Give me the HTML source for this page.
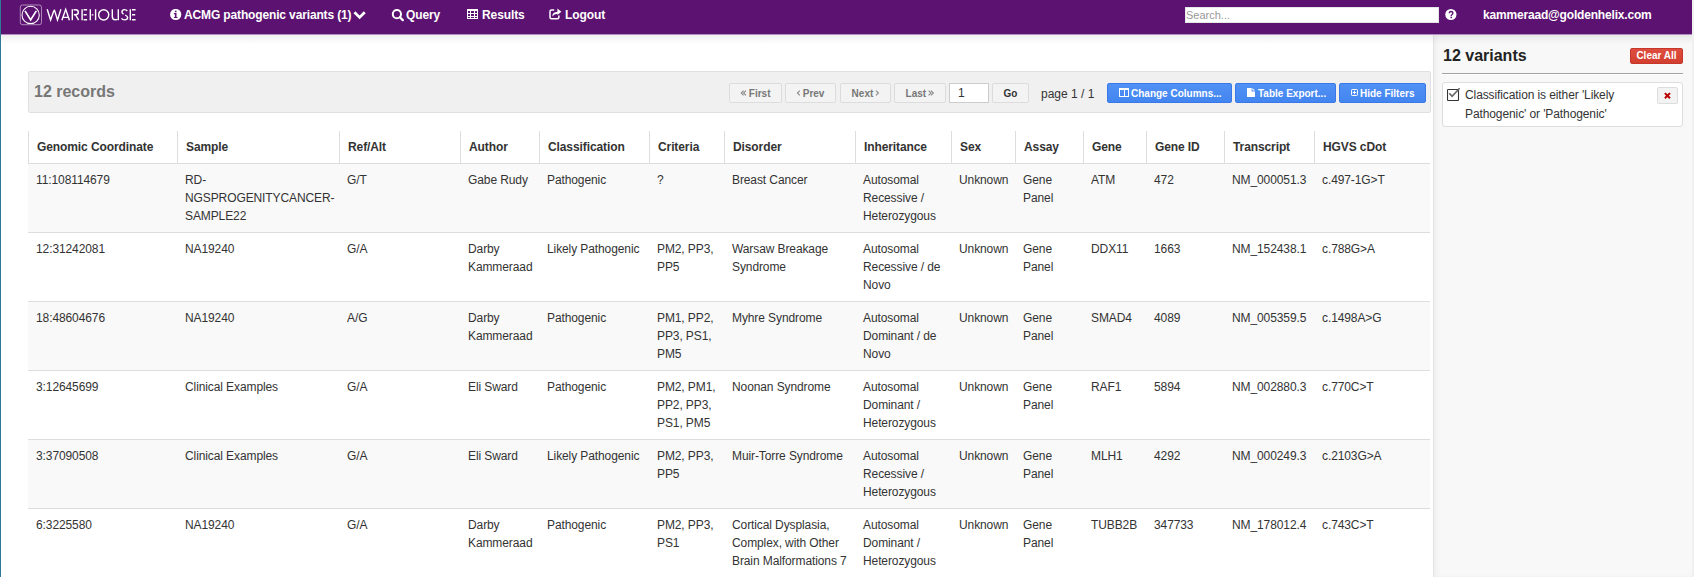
<!DOCTYPE html>
<html><head><meta charset="utf-8">
<style>
*{box-sizing:border-box;}
html,body{margin:0;padding:0;}
body{width:1694px;height:577px;overflow:hidden;position:relative;background:#fff;font-family:"Liberation Sans",sans-serif;color:#333;font-size:12px;}
.abs{position:absolute;white-space:nowrap;}
#lstrip{position:absolute;left:0;top:0;width:1px;height:577px;background:#2e7b97;z-index:5;}
#rstrip{position:absolute;left:1692px;top:0;width:2px;height:577px;background:#f0f0f0;z-index:5;}
#nav{position:absolute;left:0;top:0;width:1692px;height:34px;background:#5c1270;z-index:4;}
#navb{position:absolute;left:0;top:33px;width:1692px;height:1px;background:#520d65;z-index:4;}
#navb2{position:absolute;left:0;top:34px;width:1692px;height:1px;background:#b28ec1;z-index:4;}
#navsh{position:absolute;left:0;top:35px;width:1692px;height:9px;background:linear-gradient(rgba(0,0,0,.06),rgba(0,0,0,0));z-index:3;}
.nt{position:absolute;white-space:nowrap;color:#fff;font-weight:bold;font-size:12px;line-height:14px;top:8px;letter-spacing:-0.1px;}
#search{position:absolute;left:1185px;top:7px;width:254px;height:16px;background:#fff;border:1px solid #e6e6e6;}
#search span{position:absolute;left:0px;top:1px;line-height:13px;font-size:11px;color:#999;}
#side{position:absolute;left:1433px;top:34px;width:259px;height:543px;background:#f8f8f8;border-left:1px solid #e3e3e3;box-shadow:inset 3px 0 4px rgba(0,0,0,.04);}
#well{position:absolute;left:28px;top:71px;width:1403px;height:42px;background:#f0f0f0;border:1px solid #e0e0e0;border-radius:2px;}
.pbtn{position:absolute;top:83px;height:20px;background:#f3f3f3;border:1px solid #dcdcdc;border-radius:2px;font-size:10px;font-weight:bold;color:#777;line-height:19px;text-align:center;white-space:nowrap;}
.bbtn{position:absolute;top:83px;height:20px;background:linear-gradient(#5191f5,#4385f0);border:1px solid #3b78e7;border-radius:2px;font-size:10px;font-weight:bold;color:#fff;line-height:19px;white-space:nowrap;}
table{position:absolute;left:28px;top:131px;border-collapse:separate;border-spacing:0;table-layout:fixed;width:1402px;font-size:12px;color:#333;}
th{font-weight:bold;text-align:left;letter-spacing:-0.1px;border-left:1px solid #ddd;border-bottom:1px solid #ddd;padding:7px 8px 7px 8px;line-height:18px;height:32px;vertical-align:top;white-space:nowrap;}
td{padding:7px 8px 7px 8px;letter-spacing:-0.1px;line-height:18px;vertical-align:top;border-bottom:1px solid #ddd;height:69px;white-space:nowrap;}
tbody tr:nth-child(odd) td{background:#f9f9f9;}
</style></head>
<body>
<div id="lstrip"></div>
<div id="rstrip"></div>
<div id="navb"></div><div id="navb2"></div><div id="navsh"></div>
<div id="nav">
  <!-- logo -->
  <svg class="abs" style="left:0;top:0" width="140" height="34" viewBox="0 0 140 34">
    <rect x="20.3" y="5" width="21.2" height="19.7" rx="2.2" fill="none" stroke="rgba(255,255,255,.5)" stroke-width="1"/>
    <circle cx="30.65" cy="14.95" r="8.65" fill="none" stroke="#fff" stroke-width="1.05"/>
    <path d="M25.3 11.4 L30.65 20 L36 11.4" fill="none" stroke="#fff" stroke-width="1.7" stroke-linecap="round" stroke-linejoin="miter"/>
    <g fill="none" stroke="#fff" stroke-width="1.4" stroke-linecap="butt">
      <path d="M47.2 9.3 L50.6 20 L53.9 10.6 M54.3 9.6 L57.5 20 L60.9 9.3"/>
      <path d="M61.9 20.2 L65.7 9.3 L69.4 20.2 M63.3 17.4 H68"/>
      <path d="M72.3 9.3 V20.2 M73.6 9.7 H75.4 Q78.3 9.7 78.3 12.2 Q78.3 14.7 75.4 14.7 H73.8 M75.6 14.9 L78.6 20.2"/>
      <path d="M82.1 9.3 V20.2 M83.6 9.8 H87.1 M83.6 14.8 H86.7 M83.6 19.7 H87.1"/>
      <path d="M90.3 9.3 V20.2 M91.7 14.9 H93.4 M95.6 9.3 V20.2"/>
      <ellipse cx="103.7" cy="14.85" rx="5.05" ry="5.1"/>
      <path d="M112.3 9.3 V16.6 Q112.3 19.8 115.2 19.8 Q116.6 19.8 117.2 19.2 M118.3 9.3 V20.2"/>
      <path d="M127.3 11.2 Q126.4 9.6 124.6 9.6 Q121.9 9.6 121.9 12 Q121.9 13.3 123.6 14.2 M125.2 15.1 Q127.6 16.1 127.6 17.6 Q127.6 19.9 124.6 19.9 Q122.3 19.9 121.5 18.3"/>
      <path d="M130.3 9.3 V20.2 M132 9.8 H135.6 M132 14.8 H135.2 M132 19.7 H135.6"/>
    </g>
  </svg>
  <!-- info icon -->
  <svg class="abs" style="left:170px;top:9px" width="12" height="12" viewBox="0 0 12 12">
    <circle cx="5.7" cy="5.5" r="5.6" fill="#fff"/>
    <rect x="4.9" y="1.7" width="1.6" height="1.5" fill="#5c1270"/>
    <path d="M3.9 4.1 H6.5 V7.9 H7.5 V9.1 H3.9 V7.9 H4.9 V5.2 H3.9Z" fill="#5c1270"/>
  </svg>
  <div class="nt" style="left:184px;letter-spacing:-0.14px;">ACMG pathogenic variants (1)</div>
  <svg class="abs" style="left:353px;top:10px" width="13" height="11" viewBox="0 0 13 11">
    <path d="M2.4 3.2 L6.6 7.4 L10.8 3.2" fill="none" stroke="#fff" stroke-width="2.7" stroke-linecap="square"/>
  </svg>
  <!-- query -->
  <svg class="abs" style="left:391px;top:8px" width="14" height="14" viewBox="0 0 14 14">
    <circle cx="5.9" cy="6.2" r="4.1" fill="none" stroke="#fff" stroke-width="2"/>
    <path d="M8.9 9.2 L11.8 12.1" stroke="#fff" stroke-width="2.3" stroke-linecap="round"/>
  </svg>
  <div class="nt" style="left:406px;">Query</div>
  <!-- results -->
  <svg class="abs" style="left:467px;top:9px" width="11" height="10" viewBox="0 0 11 10" shape-rendering="crispEdges">
    <rect x="0" y="0" width="11" height="10" fill="#fff"/>
    <g fill="#5c1270"><rect x="1" y="2" width="2" height="2"/><rect x="4" y="2" width="3" height="2"/><rect x="8" y="2" width="2" height="2"/>
    <rect x="1" y="5" width="2" height="2"/><rect x="4" y="5" width="3" height="2"/><rect x="8" y="5" width="2" height="2"/>
    <rect x="1" y="8" width="2" height="1"/><rect x="4" y="8" width="3" height="1"/><rect x="8" y="8" width="2" height="1"/></g>
  </svg>
  <div class="nt" style="left:482px;">Results</div>
  <!-- logout -->
  <svg class="abs" style="left:548px;top:7px" width="15" height="14" viewBox="0 0 15 14">
    <path d="M6.2 2.9 H3.5 Q2 2.9 2 4.4 V10.3 Q2 11.8 3.5 11.8 H9.4 Q10.9 11.8 10.9 10.3 V8.4" fill="none" stroke="#fff" stroke-width="1.5"/>
    <path d="M4.3 9.6 Q4.3 4.9 9.4 4.7 V1.4 L13.4 4.7 L9.4 8 V6.7 Q6.2 6.7 4.3 9.6Z" fill="#fff"/>
  </svg>
  <div class="nt" style="left:565px;">Logout</div>
  <div id="search"><span>Search...</span></div>
  <svg class="abs" style="left:1444px;top:8px" width="14" height="14" viewBox="0 0 14 14">
    <circle cx="6.9" cy="6.5" r="5.6" fill="#fff"/>
    <path d="M5.3 5.3 Q5.3 3.5 7.1 3.5 Q8.9 3.5 8.9 5 Q8.9 5.9 8 6.5 Q7.2 7 7.2 8.2" fill="none" stroke="#5c1270" stroke-width="1.4"/>
    <rect x="6.45" y="8.9" width="1.5" height="1.3" fill="#5c1270"/>
  </svg>
  <div class="nt" style="left:1483px;letter-spacing:-0.18px;">kammeraad@goldenhelix.com</div>
</div>

<!-- sidebar -->
<div id="side"></div>
<div class="abs" style="left:1443px;top:46px;font-size:16px;font-weight:bold;color:#222;line-height:20px;">12 variants</div>
<div class="abs" style="left:1630px;top:48px;width:53px;height:16px;background:linear-gradient(#de4d3f,#d23f31);border:1px solid #c5372a;border-radius:2px;color:#fff;font-size:10px;font-weight:bold;line-height:14px;text-align:center;">Clear All</div>
<div class="abs" style="left:1442px;top:73px;width:241px;height:1px;background:#a3a3a3;"></div><div class="abs" style="left:1442px;top:74px;width:241px;height:1px;background:#fff;"></div>
<div class="abs" style="left:1442px;top:82px;width:241px;height:45px;background:#fff;border:1px solid #ddd;border-radius:3px;"></div>
<svg class="abs" style="left:1447px;top:87px" width="15" height="15" viewBox="0 0 15 15">
  <rect x="0.5" y="2.5" width="11" height="11" rx="0.6" fill="#fff" stroke="#333" stroke-width="1.1"/>
  <path d="M2.3 6.3 L5.1 9.4 L12.6 1.2" fill="none" stroke="#666" stroke-width="1.6"/>
</svg>
<div class="abs" style="left:1465px;top:86px;font-size:12px;line-height:19px;color:#333;letter-spacing:-0.1px;">Classification is either 'Likely<br>Pathogenic' or 'Pathogenic'</div>
<div class="abs" style="left:1657px;top:87px;width:21px;height:17px;background:#f3f3f3;border:1px solid #ddd;border-radius:2px;"></div>
<svg class="abs" style="left:1663px;top:91px" width="9" height="9" viewBox="0 0 9 9">
  <path d="M1.9 2.1 L7 7.2 M7 2.1 L1.9 7.2" stroke="#b80000" stroke-width="2"/>
</svg>

<!-- records well -->
<div id="well"></div>
<div class="abs" style="left:34px;top:82px;font-size:16px;font-weight:bold;color:#777;line-height:20px;">12 records</div>
<div class="pbtn" style="left:729px;width:53px;"><span style="color:transparent">&#171;</span> First</div>
<div class="pbtn" style="left:785px;width:51px;"><span style="color:transparent">&#8249;</span> Prev</div>
<div class="pbtn" style="left:840px;width:51px;">Next <span style="color:transparent">&#8250;</span></div>
<div class="pbtn" style="left:894px;width:52px;">Last <span style="color:transparent">&#187;</span></div>
<svg class="abs" style="left:738px;top:88px" width="200" height="10" viewBox="738 88 200 10">
  <g fill="none" stroke="#8a8a8a" stroke-width="1.1">
    <path d="M743.6 90.6 L741.2 93 L743.6 95.4 M746 90.6 L743.6 93 L746 95.4"/>
    <path d="M799.8 90.6 L797.4 93 L799.8 95.4"/>
    <path d="M876 90.6 L878.4 93 L876 95.4"/>
    <path d="M928.6 90.6 L931 93 L928.6 95.4 M931 90.6 L933.4 93 L931 95.4"/>
  </g>
</svg>
<div class="abs" style="left:949px;top:83px;width:40px;height:20px;background:#fff;border:1px solid #ccc;font-size:12px;line-height:19px;padding-left:8px;color:#333;">1</div>
<div class="pbtn" style="left:992px;width:37px;color:#333;">Go</div>
<div class="abs" style="left:1041px;top:86px;font-size:12px;line-height:16px;color:#333;">page 1 / 1</div>
<div class="bbtn" style="left:1107px;width:125px;padding-left:23px;">Change Columns...</div>
<div class="bbtn" style="left:1235px;width:101px;padding-left:22px;">Table Export...</div>
<div class="bbtn" style="left:1339px;width:87px;padding-left:20px;">Hide Filters</div>
<svg class="abs" style="left:1119px;top:88px" width="10" height="9" viewBox="0 0 10 9">
  <path d="M0 0 H10 V9 H0 Z M1 2 V8 H5 V2 Z M6 2 V8 H9 V2 Z" fill="#fff" fill-rule="evenodd"/>
</svg>
<svg class="abs" style="left:1247px;top:88px" width="8" height="9" viewBox="0 0 8 9">
  <path d="M0 0 H4.6 V3.4 H8 V9 H0 Z" fill="#fff"/>
  <path d="M5.4 0 L8 2.6 H5.4 Z" fill="#fff"/>
</svg>
<svg class="abs" style="left:1351px;top:89px" width="7" height="7" viewBox="0 0 7 7">
  <path d="M1.3 0.5 H5.7 Q6.5 0.5 6.5 1.3 V5.7 Q6.5 6.5 5.7 6.5 H1.3 Q0.5 6.5 0.5 5.7 V1.3 Q0.5 0.5 1.3 0.5 Z" fill="none" stroke="#fff" stroke-width="1"/>
  <path d="M3.5 1.8 V5.2 M1.8 3.5 H5.2" stroke="#fff" stroke-width="1"/>
</svg>

<table>
<colgroup>
<col style="width:149px">
<col style="width:162px">
<col style="width:121px">
<col style="width:79px">
<col style="width:110px">
<col style="width:75px">
<col style="width:131px">
<col style="width:96px">
<col style="width:64px">
<col style="width:68px">
<col style="width:63px">
<col style="width:78px">
<col style="width:90px">
<col style="width:116px">
</colgroup>
<thead><tr>
<th>Genomic Coordinate</th>
<th>Sample</th>
<th>Ref/Alt</th>
<th>Author</th>
<th>Classification</th>
<th>Criteria</th>
<th>Disorder</th>
<th>Inheritance</th>
<th>Sex</th>
<th>Assay</th>
<th>Gene</th>
<th>Gene ID</th>
<th>Transcript</th>
<th>HGVS cDot</th>
</tr></thead>
<tbody>
<tr><td>11:108114679</td><td>RD-<br>NGSPROGENITYCANCER-<br>SAMPLE22</td><td>G/T</td><td>Gabe Rudy</td><td>Pathogenic</td><td>?</td><td>Breast Cancer</td><td>Autosomal<br>Recessive /<br>Heterozygous</td><td>Unknown</td><td>Gene<br>Panel</td><td>ATM</td><td>472</td><td>NM_000051.3</td><td>c.497-1G&gt;T</td></tr>
<tr><td>12:31242081</td><td>NA19240</td><td>G/A</td><td>Darby<br>Kammeraad</td><td>Likely Pathogenic</td><td>PM2, PP3,<br>PP5</td><td>Warsaw Breakage<br>Syndrome</td><td>Autosomal<br>Recessive / de<br>Novo</td><td>Unknown</td><td>Gene<br>Panel</td><td>DDX11</td><td>1663</td><td>NM_152438.1</td><td>c.788G&gt;A</td></tr>
<tr><td>18:48604676</td><td>NA19240</td><td>A/G</td><td>Darby<br>Kammeraad</td><td>Pathogenic</td><td>PM1, PP2,<br>PP3, PS1,<br>PM5</td><td>Myhre Syndrome</td><td>Autosomal<br>Dominant / de<br>Novo</td><td>Unknown</td><td>Gene<br>Panel</td><td>SMAD4</td><td>4089</td><td>NM_005359.5</td><td>c.1498A&gt;G</td></tr>
<tr><td>3:12645699</td><td>Clinical Examples</td><td>G/A</td><td>Eli Sward</td><td>Pathogenic</td><td>PM2, PM1,<br>PP2, PP3,<br>PS1, PM5</td><td>Noonan Syndrome</td><td>Autosomal<br>Dominant /<br>Heterozygous</td><td>Unknown</td><td>Gene<br>Panel</td><td>RAF1</td><td>5894</td><td>NM_002880.3</td><td>c.770C&gt;T</td></tr>
<tr><td>3:37090508</td><td>Clinical Examples</td><td>G/A</td><td>Eli Sward</td><td>Likely Pathogenic</td><td>PM2, PP3,<br>PP5</td><td>Muir-Torre Syndrome</td><td>Autosomal<br>Recessive /<br>Heterozygous</td><td>Unknown</td><td>Gene<br>Panel</td><td>MLH1</td><td>4292</td><td>NM_000249.3</td><td>c.2103G&gt;A</td></tr>
<tr><td>6:3225580</td><td>NA19240</td><td>G/A</td><td>Darby<br>Kammeraad</td><td>Pathogenic</td><td>PM2, PP3,<br>PS1</td><td>Cortical Dysplasia,<br>Complex, with Other<br>Brain Malformations 7</td><td>Autosomal<br>Dominant /<br>Heterozygous</td><td>Unknown</td><td>Gene<br>Panel</td><td>TUBB2B</td><td>347733</td><td>NM_178012.4</td><td>c.743C&gt;T</td></tr>
</tbody></table>
</body></html>
